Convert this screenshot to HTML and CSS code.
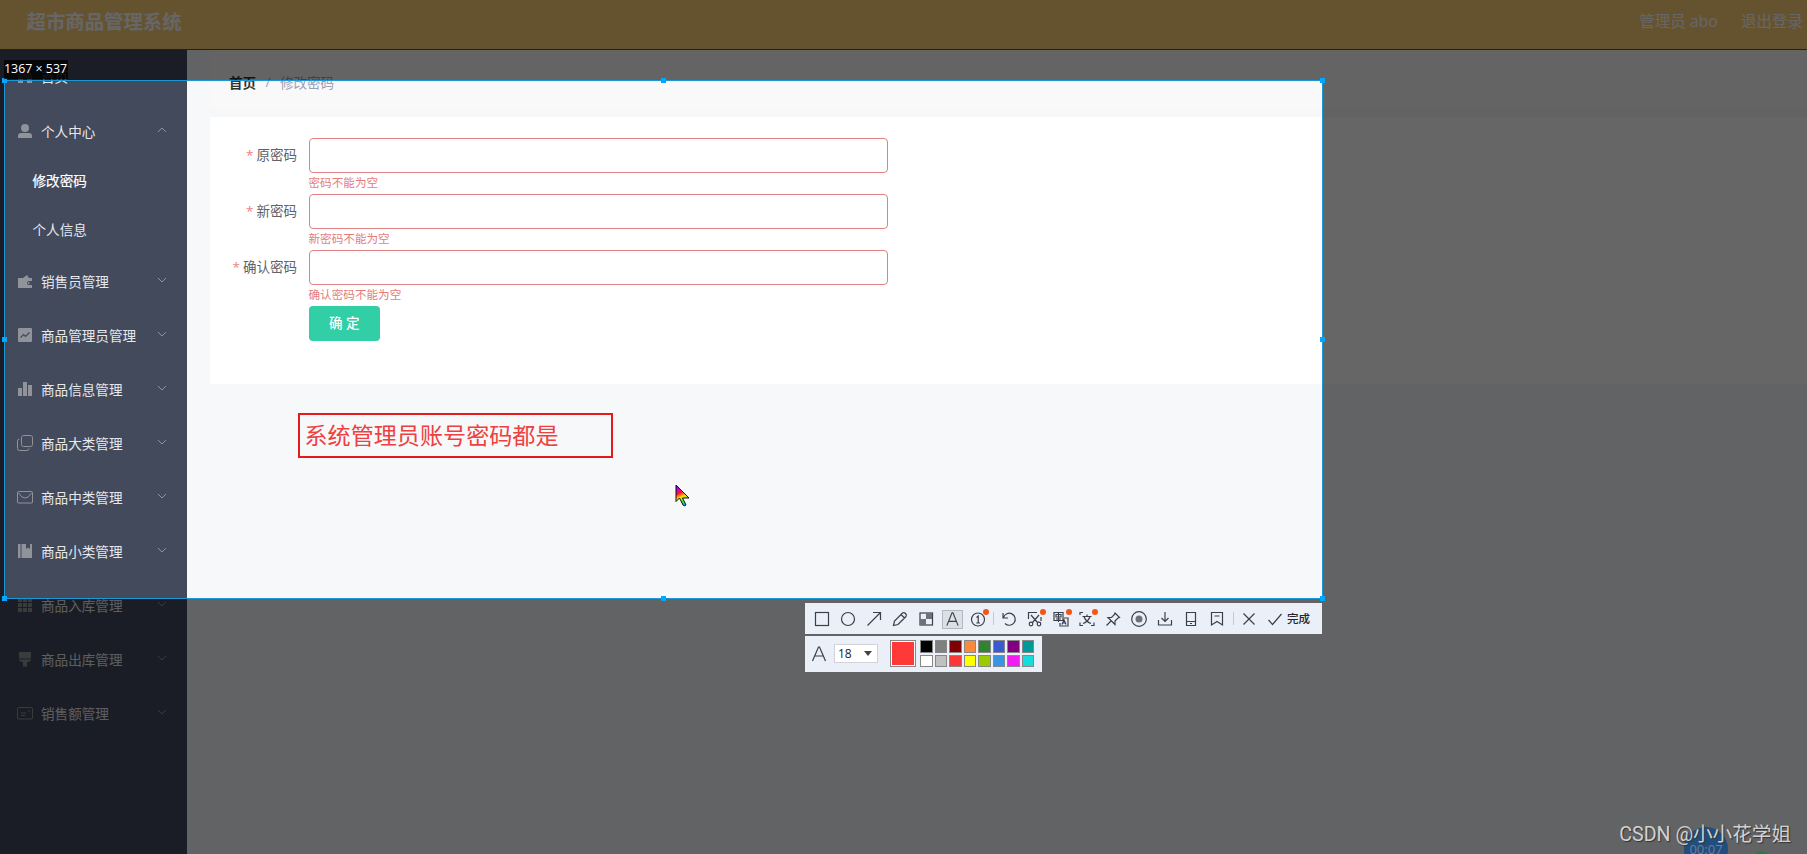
FILE: index.html
```
<!DOCTYPE html>
<html lang="zh-CN">
<head>
    <meta charset="UTF-8">
    <meta name="viewport" content="width=device-width, initial-scale=1.0">
    <title>超市商品管理系统</title>
    <link rel="stylesheet" href="styles.css">
</head>
<body>
    <header class="header">
        <h1 class="title">超市商品管理系统</h1>
        <div class="user">
            <span>管理员 <span class="name">abo</span></span>
            <a class="logout">退出登录</a>
        </div>
    </header>

    <div class="container">
        <nav class="sidebar">
            <div class="menu-item home">
                <svg class="menu-icon" viewBox="0 0 14 14"><path d="M7 0l7 5v9H9V9H5v5H0V5z"/></svg>
                <span>首页</span>
            </div>
            <div class="menu-item">
                <svg class="menu-icon" viewBox="0 0 14 14"><circle cx="7" cy="4" r="4"/><path d="M0 14v-2q0-3 3-3h8q3 0 3 3v2z"/></svg>
                <span>个人中心</span>
                <svg class="arrow" viewBox="0 0 10 6"><path d="M1 5l4-4 4 4"/></svg>
            </div>
            <div class="sub-item active">修改密码</div>
            <div class="sub-item">个人信息</div>
            <div class="menu-item">
                <svg class="menu-icon" viewBox="0 0 14 14"><path d="M0 4h5l4-3 2 3h3v3h-3a2 2 0 0 0 0 4h3v3H0z"/><circle cx="10.8" cy="9" r=".9"/></svg>
                <span>销售员管理</span>
                <svg class="arrow" viewBox="0 0 10 6"><path d="M1 1l4 4 4-4"/></svg>
            </div>
            <div class="menu-item">
                <svg class="menu-icon" viewBox="0 0 14 14"><rect width="14" height="14" rx="1"/><path class="cut" d="M2.5 9.5l3-3 2 2 4-4"/></svg>
                <span>商品管理员管理</span>
                <svg class="arrow" viewBox="0 0 10 6"><path d="M1 1l4 4 4-4"/></svg>
            </div>
            <div class="menu-item">
                <svg class="menu-icon" viewBox="0 0 14 14"><path d="M0 6h4v8H0zM5 0h4v14H5zM10 3h4v11h-4z"/></svg>
                <span>商品信息管理</span>
                <svg class="arrow" viewBox="0 0 10 6"><path d="M1 1l4 4 4-4"/></svg>
            </div>
            <div class="menu-item">
                <svg class="menu-icon line" viewBox="0 0 14 14"><rect x="3.5" y="-.5" width="11" height="11" rx="2"/><path d="M1.5 3Q-.5 3-.5 5v7.500q0 2 2 2H9q2 0 2-2"/></svg>
                <span>商品大类管理</span>
                <svg class="arrow" viewBox="0 0 10 6"><path d="M1 1l4 4 4-4"/></svg>
            </div>
            <div class="menu-item">
                <svg class="menu-icon line" viewBox="0 0 14 14"><rect x="-.5" y="1.500" width="15" height="11.500" rx="1"/><path d="M0 2.500l4 4.500q3 2 6 0l4-4.500"/></svg>
                <span>商品中类管理</span>
                <svg class="arrow" viewBox="0 0 10 6"><path d="M1 1l4 4 4-4"/></svg>
            </div>
            <div class="menu-item">
                <svg class="menu-icon" viewBox="0 0 14 14"><path d="M0 0h2.500v14H0zM3.500 0H8v5l2-1.500L12 5V0h2v14H3.500z"/></svg>
                <span>商品小类管理</span>
                <svg class="arrow" viewBox="0 0 10 6"><path d="M1 1l4 4 4-4"/></svg>
            </div>
            <div class="menu-item">
                <svg class="menu-icon" viewBox="0 0 14 14"><path d="M0 0h4v4H0zM5 0h4v4H5zM10 0h4v4h-4zM0 5h4v4H0zM5 5h4v4H5zM10 5h4v4h-4zM0 10h4v4H0zM5 10h4v4H5zM10 10h4v4h-4z"/></svg>
                <span>商品入库管理</span>
                <svg class="arrow" viewBox="0 0 10 6"><path d="M1 1l4 4 4-4"/></svg>
            </div>
            <div class="menu-item">
                <svg class="menu-icon" viewBox="0 0 14 14"><path d="M1 0h12v6.500H1zM1 7.500h12v1L10.500 10H9v4.500H5V10H3.500L1 8.500z"/></svg>
                <span>商品出库管理</span>
                <svg class="arrow" viewBox="0 0 10 6"><path d="M1 1l4 4 4-4"/></svg>
            </div>
            <div class="menu-item">
                <svg class="menu-icon line" viewBox="0 0 14 14"><rect x="-.5" y="1.500" width="15" height="11.500" rx="1"/><path d="M3 7h5M3 9.500h4M10 5h2"/></svg>
                <span>销售额管理</span>
                <svg class="arrow" viewBox="0 0 10 6"><path d="M1 1l4 4 4-4"/></svg>
            </div>
        </nav>

        <main class="main">
            <div class="breadcrumb"><b>首页</b><i>/</i><span>修改密码</span></div>
            <form class="card">
                <div class="form-item">
                    <label for="old">原密码</label>
                    <div class="field">
                        <input id="old" type="password">
                        <div class="error">密码不能为空</div>
                    </div>
                </div>
                <div class="form-item">
                    <label for="new">新密码</label>
                    <div class="field">
                        <input id="new" type="password">
                        <div class="error">新密码不能为空</div>
                    </div>
                </div>
                <div class="form-item">
                    <label for="again">确认密码</label>
                    <div class="field">
                        <input id="again" type="password">
                        <div class="error">确认密码不能为空</div>
                    </div>
                </div>
                <button type="button" class="submit">确 定</button>
            </form>
        </main>
    </div>

    <!-- screen capture layer -->
    <div class="selection">
        <i class="handle h-tl"></i><i class="handle h-t"></i><i class="handle h-tr"></i>
        <i class="handle h-l"></i><i class="handle h-r"></i>
        <i class="handle h-bl"></i><i class="handle h-b"></i><i class="handle h-br"></i>
    </div>
    <div class="size-tip">1367 × 537</div>
    <div class="note">系统管理员账号密码都是</div>

    <svg class="cursor" viewBox="0 0 15 23">
        <defs>
            <linearGradient id="rainbow" gradientUnits="userSpaceOnUse" x1="1" y1="1" x2="10" y2="21">
                <stop offset="0" stop-color="#2020c0"/>
                <stop offset=".2" stop-color="#c000e0"/>
                <stop offset=".4" stop-color="#ff1030"/>
                <stop offset=".6" stop-color="#ffe000"/>
                <stop offset=".76" stop-color="#60f020"/>
                <stop offset="1" stop-color="#00b0ff"/>
            </linearGradient>
        </defs>
        <path d="M1 1v16.500l3.500-3.500 3.500 7q1 1.500 3 0l-3.500-7H14z" fill="url(#rainbow)" stroke="#111"/>
    </svg>

    <div class="toolbar">
        <span class="tool"><svg viewBox="0 0 18 18"><rect x="2.500" y="2.500" width="13" height="13"/></svg></span>
        <span class="tool"><svg viewBox="0 0 18 18"><circle cx="9" cy="9" r="6.500"/></svg></span>
        <span class="tool"><svg viewBox="0 0 18 18"><path d="M2.500 15.500l13-13M8 2.500h7.500V10"/></svg></span>
        <span class="tool"><svg viewBox="0 0 18 18"><path d="M2.500 15.500l1-4.500 8-8q1.500-1 3 .5t.5 3l-8 8zM10 4.500l3.500 3.500"/></svg></span>
        <span class="tool"><svg viewBox="0 0 18 18"><rect x="3" y="3" width="12.500" height="12"/><path class="solid" d="M9 3h6v6H9zM3 9h6v6H3z"/></svg></span>
        <span class="tool"><svg class="picked" viewBox="0 0 20 18"><path d="M4 15.500L9.500 2h1L16 15.500M6 11h8"/></svg></span>
        <span class="tool badge"><svg viewBox="0 0 18 18"><circle cx="9" cy="9.500" r="6.500"/><path d="M7.500 7.500L9.200 6v7M7.300 13h3.700"/></svg></span>
        <span class="split"></span>
        <span class="tool"><svg viewBox="0 0 18 18"><path d="M3 3v5h5M3.500 7.500A6 6 0 1 1 5 13.500"/></svg></span>
        <span class="tool badge"><svg viewBox="0 0 18 18"><path d="M2.500 5V2.500H11M15 7v4M2.500 5v4M5 5l6.500 7.500M13 5l-6.500 7.500"/><circle cx="5" cy="14" r="1.800"/><circle cx="13" cy="14" r="1.800"/></svg></span>
        <span class="tool badge"><svg viewBox="0 0 18 18"><path d="M2 2.500h9v8H2zM4 4.500h5v2.500H4zM6.500 3v9M4 9h5M12 8h4v8H8v-3M10 14.500l2-4.500 2 4.500M11 13h2"/></svg></span>
        <span class="tool badge"><svg viewBox="0 0 18 18"><path d="M2 5V2.500h3M2 12.500V15.500h3M16 12.500V15.500h-3M4.500 6.500h9M9 4.500v2M12 6.500q-1.500 5-7 7M6 6.500q1.500 5 7 7"/></svg></span>
        <span class="tool"><svg viewBox="0 0 18 18"><path d="M11 3l4.500 4.500-1.500.5-3 3v3.500L4 7.500h3.500l3-3zM7 11l-4.500 4.500"/></svg></span>
        <span class="tool"><svg viewBox="0 0 18 18"><circle cx="9" cy="9" r="7.300"/><circle class="solid" cx="9" cy="9" r="3.500"/></svg></span>
        <span class="tool"><svg viewBox="0 0 18 18"><path d="M9 2v9.500M5.500 8L9 11.500 12.500 8M2.500 10v5h13v-5"/></svg></span>
        <span class="tool"><svg viewBox="0 0 18 18"><path d="M4.500 2.500h9v13h-9zM4.500 11.500h9M8 13.500h2"/></svg></span>
        <span class="tool"><svg viewBox="0 0 18 18"><path d="M3.500 2.500h11v12.500L9 11.500 3.500 15zM6.500 6h5"/></svg></span>
        <span class="split"></span>
        <span class="tool"><svg viewBox="0 0 18 18"><path d="M3.500 3.500l11 11M14.500 3.500l-11 11"/></svg></span>
        <span class="tool"><svg viewBox="0 0 18 18"><path d="M2.500 10l4 4.500L15.500 4"/></svg></span>
        <span class="done">完成</span>
    </div>

    <div class="options">
        <svg class="font-icon" viewBox="0 0 16 16"><path d="M1.500 15L7.500 1h1L14.500 15M4 10h8"/></svg>
        <div class="select">18<i class="caret"></i></div>
        <div class="current"></div>
        <div class="palette">
            <i class="black"></i><i class="gray"></i><i class="maroon"></i><i class="orange"></i><i class="green"></i><i class="blue"></i><i class="purple"></i><i class="teal"></i>
            <i class="white"></i><i class="silver"></i><i class="red"></i><i class="yellow"></i><i class="lime"></i><i class="sky"></i><i class="magenta"></i><i class="cyan"></i>
        </div>
    </div>

    <div class="timer">00:07</div>
    <div class="timer-dot"></div>
    <div class="watermark">CSDN @小小花学姐</div>
</body>
</html>
```
FILE: styles.css
```
* {
    box-sizing: border-box;
}

body {
    margin: 0;
    height: 854px;
    position: relative;
    overflow: hidden;
    display: flex;
    flex-direction: column;
    background-color: #f6f8fa;
    font-family: "Open Sans", "Noto Sans CJK SC", sans-serif;
    font-size: 13.5px;
}

i {
    font-style: normal;
}

.header {
    height: 50px;
    flex: none;
    display: flex;
    justify-content: space-between;
    padding: 0 4px 0 26.5px;
    background-color: #fccf78;
    border-bottom: 1px solid #5c5040;
    color: #fff;
    line-height: 42px;
}

.title {
    margin: 0;
    font-size: 19.4px;
    line-height: 43px;
}

.user {
    display: flex;
    gap: 23px;
    font-size: 15.5px;
}

.name {
    font-size: 16px;
}

.container {
    flex: 1;
    display: flex;
    min-height: 0;
}

/* sidebar */
.sidebar {
    width: 187px;
    flex: none;
    background-color: #434a5c;
    color: #e6e8ec;
    font-size: 13.6px;
}

.menu-item {
    height: 54px;
    display: flex;
    align-items: center;
    padding: 0 20px 0 18px;
}

.home {
    padding-bottom: 3px;
}

.menu-icon {
    width: 14px;
    height: 14px;
    margin-right: 9px;
    fill: #909399;
    overflow: visible;
}

.menu-icon.line {
    fill: none;
    stroke: #909399;
}

.menu-icon .cut {
    fill: none;
    stroke: #434a5c;
    stroke-width: 1.2;
}

.arrow {
    width: 10px;
    height: 6px;
    margin: 0 0 2px auto;
    fill: none;
    stroke: #909399;
}

.sub-item {
    height: 48px;
    line-height: 47px;
    padding-left: 32.5px;
}

.active {
    line-height: 46px;
    color: #fff;
    -webkit-text-stroke: .2px #fff;
}

/* content */
.main {
    flex: 1;
    padding-left: 23px;
}

.breadcrumb {
    height: 57px;
    margin-bottom: 10px;
    padding: 7px 0 0 19px;
    display: flex;
    align-items: center;
    background-color: #f9f9f9;
    color: #99a1b7;
}

.breadcrumb b {
    color: #303133;
}

.breadcrumb i {
    margin: 0 9.5px;
}

.card {
    height: 267px;
    padding: 21px 20px;
    background-color: #fff;
}

.form-item {
    height: 56px;
    display: flex;
}

.form-item label {
    width: 98.5px;
    margin-left: -20px;
    padding-right: 11.5px;
    line-height: 34px;
    text-align: right;
    color: #606266;
}

.form-item label::before {
    content: "*";
    margin-right: 3px;
    color: #f08080;
}

.field input {
    display: block;
    width: 579px;
    height: 35px;
    border: 1px solid #e08284;
    border-radius: 4px;
    background-color: #fff;
}

.error {
    font-size: 11.6px;
    line-height: 20px;
    color: #e57c7c;
}

.submit {
    display: block;
    width: 71.5px;
    height: 35px;
    margin-left: 78.5px;
    padding: 0 0 3px;
    border: none;
    border-radius: 4px;
    background-color: #32cea6;
    color: #fff;
    font: 500 13.5px "Open Sans", "Noto Sans CJK SC", sans-serif;
}

/* capture layer */
.selection {
    position: absolute;
    left: 4px;
    top: 80px;
    width: 1319px;
    height: 519px;
    border: 1px solid #1c98d8;
    box-shadow: 0 0 0 2000px rgba(0, 0, 0, .6);
}

.handle {
    position: absolute;
    width: 5px;
    height: 5px;
    background-color: #00a8ff;
}

.h-tl, .h-t, .h-tr { top: -3px; }
.h-bl, .h-b, .h-br { bottom: -3px; }
.h-tl, .h-l, .h-bl { left: -3px; }
.h-tr, .h-r, .h-br { right: -3px; }
.h-t, .h-b { left: 656px; }
.h-l, .h-r { top: 256px; }

.size-tip {
    position: absolute;
    left: 4px;
    top: 60px;
    width: 64px;
    height: 19px;
    background-color: rgba(0, 0, 0, .75);
    color: #fff;
    font-size: 12.4px;
    line-height: 17px;
    white-space: nowrap;
}

.note {
    position: absolute;
    left: 298px;
    top: 413px;
    width: 315px;
    height: 45px;
    padding-left: 4.5px;
    border: 2px solid #e51a1a;
    color: #ee4040;
    font-size: 23.1px;
    line-height: 41px;
}

.cursor {
    position: absolute;
    left: 675px;
    top: 484px;
    width: 15px;
    height: 23px;
}

.toolbar {
    position: absolute;
    left: 805px;
    top: 603px;
    width: 517px;
    height: 31px;
    padding-left: 4px;
    display: flex;
    align-items: center;
    background-color: #ebf0f8;
}

.tool {
    position: relative;
    width: 26px;
    height: 18px;
    flex: none;
    text-align: center;
}

.tool svg {
    display: block;
    width: 18px;
    height: 18px;
    margin: 0 auto;
    fill: none;
    stroke: #3a3f4b;
    stroke-width: 1.2;
}

.tool svg.picked {
    width: 21px;
    height: 19px;
    border: 1px solid #b4b8c0;
    background-color: #dcdfe5;
}

.tool .solid {
    fill: #6d717b;
    stroke: none;
}

.badge::after {
    content: "";
    position: absolute;
    right: 2px;
    top: -1px;
    width: 6px;
    height: 6px;
    border-radius: 50%;
    background-color: #f45512;
}

.split {
    width: 1px;
    height: 13px;
    margin: 0 2px;
    background-color: #c5c9d0;
}

.split ~ .split {
    margin-left: 3px;
}

.done {
    margin: -2px 0 0 -1px;
    color: #23262e;
    font-size: 11.5px;
    font-weight: 500;
}

.options {
    position: absolute;
    left: 805px;
    top: 636px;
    width: 237px;
    height: 36px;
    padding: 0 0 1px 6px;
    display: flex;
    align-items: center;
    background-color: #ebf0f8;
}

.font-icon {
    width: 16px;
    height: 16px;
    margin-right: 7px;
    fill: none;
    stroke: #3a3f4b;
    stroke-width: 1.2;
}

.select {
    width: 44px;
    height: 19px;
    padding: 0 5px 1px 3px;
    display: flex;
    align-items: center;
    justify-content: space-between;
    border: 1px solid #d0d4da;
    background-color: #fff;
    color: #222;
    font-size: 12px;
}

.caret {
    border: 4px solid transparent;
    border-top: 5px solid #444;
    border-bottom: 0;
}

.current {
    width: 26px;
    height: 27px;
    margin: 0 4px 0 12px;
    border: 1px solid #888;
    background-color: #ff3838;
    box-shadow: inset 0 0 0 1px #fff;
}

.palette {
    display: grid;
    grid-template-columns: repeat(8, 12.5px);
    gap: 2px;
}

.palette i {
    height: 12.5px;
    border: 1px solid #888;
}

.black { background-color: #000; }
.gray { background-color: #808080; }
.maroon { background-color: #800000; }
.orange { background-color: #f98a3c; }
.green { background-color: #308430; }
.blue { background-color: #385ad3; }
.purple { background-color: #800080; }
.teal { background-color: #009999; }
.white { background-color: #fff; }
.silver { background-color: #c0c0c0; }
.red { background-color: #fb3838; }
.yellow { background-color: #ffff00; }
.lime { background-color: #99cc00; }
.sky { background-color: #3894e4; }
.magenta { background-color: #f31bf3; }
.cyan { background-color: #16dcdc; }

.timer {
    position: absolute;
    left: 1684px;
    top: 827px;
    width: 44px;
    height: 44px;
    border-radius: 50%;
    background-color: #224e7d;
    color: #667f9c;
    font-size: 13px;
    line-height: 45px;
    text-align: center;
}

.timer-dot {
    position: absolute;
    left: 1752px;
    top: 851px;
    width: 18px;
    height: 18px;
    border-radius: 50%;
    background-color: #2c7a42;
}

.watermark {
    position: absolute;
    right: 16px;
    top: 821px;
    color: #d2d2d2;
    font-family: Roboto, "Noto Sans CJK SC", sans-serif;
    font-size: 19.6px;
    line-height: 28px;
    text-shadow: 1px 1px 1px #333;
}
```
